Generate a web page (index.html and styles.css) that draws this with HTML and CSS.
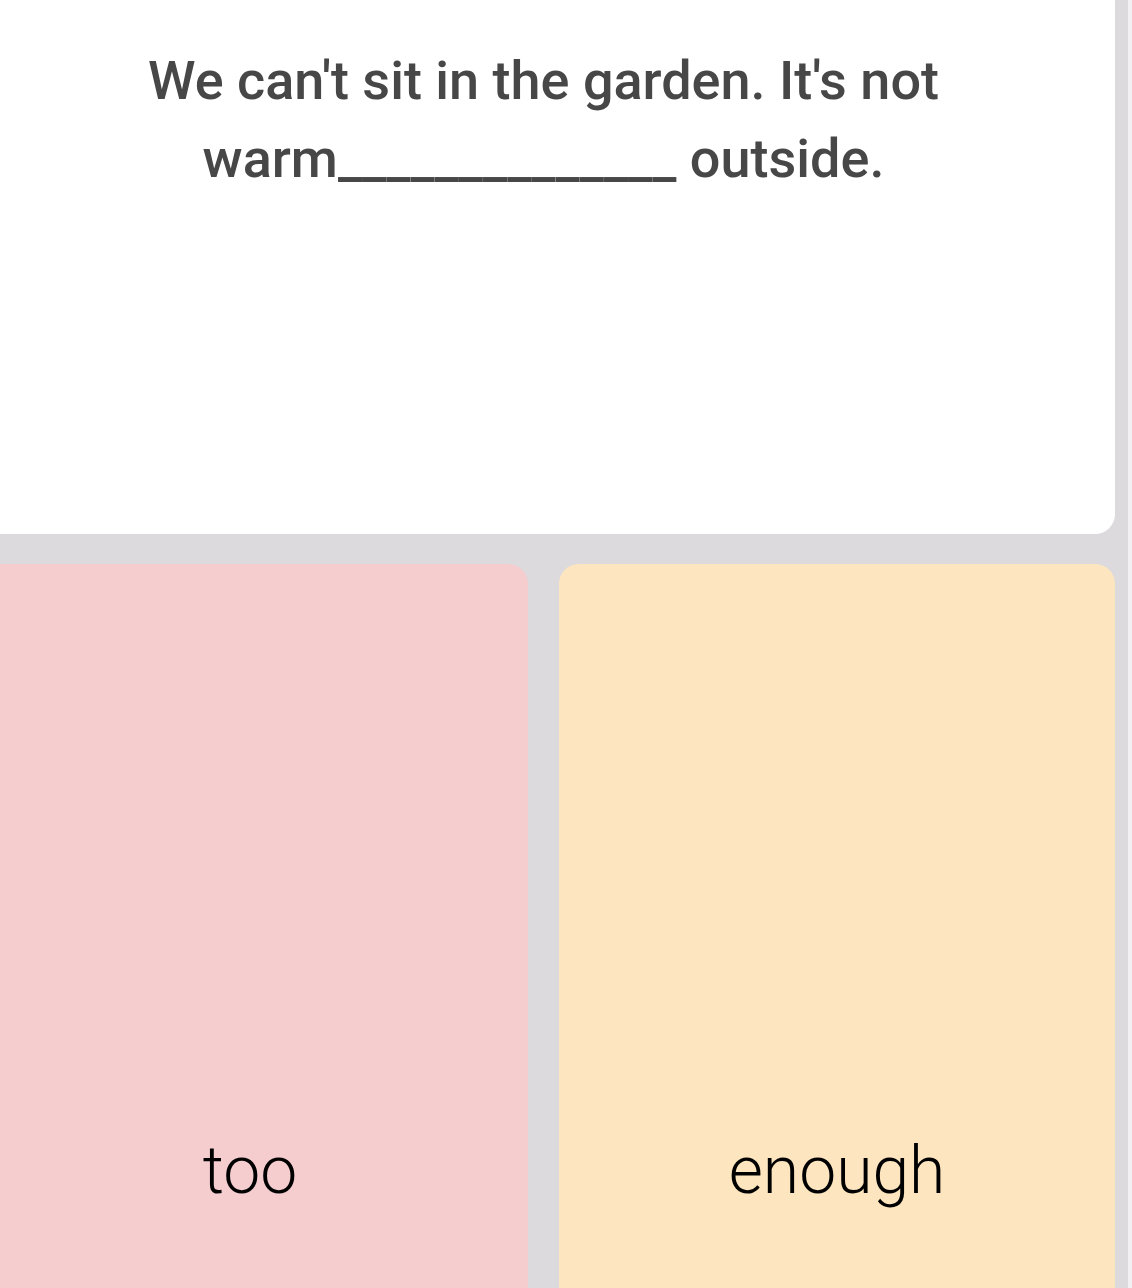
FILE: index.html
```html
<!DOCTYPE html>
<html lang="en">
<head>
    <meta charset="UTF-8">
    <meta name="viewport" content="width=device-width, initial-scale=1.0">
    <title>Quiz</title>
    <link rel="stylesheet" href="styles.css">
</head>
<body>
    <div class="screen">
        <div class="quiz">
            <!-- Question -->
            <div class="question-card">
                <p class="question">We can't sit in the garden. It's not warm______________ outside.</p>
            </div>

            <!-- Answers -->
            <div class="answers">
                <div class="answer answer-pink">too</div>
                <div class="answer answer-yellow">enough</div>
            </div>
        </div>
        <div class="rail"></div>
    </div>
</body>
</html>
```

FILE: styles.css
```css
/* General */
html, body {
    margin: 0;
    height: 100%;
    overflow: hidden;
}

body {
    font-family: Roboto, "Noto Sans", sans-serif;
    background-color: #dcdadd;
}

.screen {
    display: flex;
    height: 1288px;
}

.quiz {
    flex: 1;
    display: flex;
    flex-direction: column;
    gap: 30px;
    margin-left: -28px;
    margin-right: 13px;
}

.rail {
    width: 4px;
    background-color: #f2f0f3;
}

/* Question */
.question-card {
    background-color: #ffffff;
    height: 534px;
    border-radius: 0 0 20px 20px;
    padding: 42px 160px 0;
    box-sizing: border-box;
}

.question {
    margin: 0;
    text-align: center;
    font-size: 54px;
    font-weight: 500;
    line-height: 78px;
    color: #474747;
}

/* Answers */
.answers {
    flex: 1;
    display: flex;
    gap: 31px;
}

.answer {
    flex: 1;
    border-radius: 20px 20px 0 0;
    display: flex;
    align-items: flex-end;
    justify-content: center;
    padding-bottom: 79px;
    font-size: 66px;
    font-weight: 300;
    color: #000000;
}

.answer-pink {
    background-color: #f5cdcf;
}

.answer-yellow {
    background-color: #fde6bf;
}
```
